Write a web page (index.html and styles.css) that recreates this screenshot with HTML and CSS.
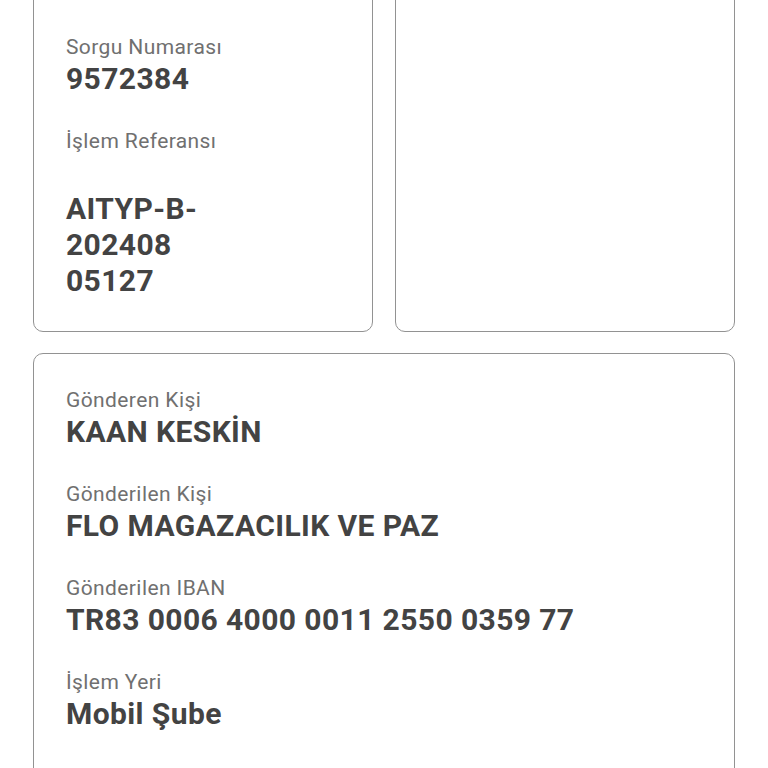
FILE: index.html
```html
<!DOCTYPE html>
<html lang="tr">
<head>
    <meta charset="UTF-8">
    <meta name="viewport" content="width=device-width, initial-scale=1.0">
    <title>İşlem Detayı</title>
    <link rel="stylesheet" href="styles.css">
</head>
<body>
    <div class="page">
        <div class="top-row">
            <div class="card card-top">
                <div class="field">
                    <div class="label">Sorgu Numarası</div>
                    <div class="value">9572384</div>
                </div>
                <div class="field">
                    <div class="label">İşlem Referansı</div>
                    <div class="value value-ref">AITYP-B-<br>202408<br>05127</div>
                </div>
            </div>
            <div class="card card-top"></div>
        </div>

        <div class="card card-bottom">
            <div class="field">
                <div class="label">Gönderen Kişi</div>
                <div class="value">KAAN KESKİN</div>
            </div>
            <div class="field">
                <div class="label">Gönderilen Kişi</div>
                <div class="value">FLO MAGAZACILIK VE PAZ</div>
            </div>
            <div class="field">
                <div class="label">Gönderilen IBAN</div>
                <div class="value">TR83 0006 4000 0011 2550 0359 77</div>
            </div>
            <div class="field">
                <div class="label">İşlem Yeri</div>
                <div class="value">Mobil Şube</div>
            </div>
        </div>
    </div>
</body>
</html>
```

FILE: styles.css
```css
body, html {
    margin: 0;
    padding: 0;
    background-color: #fff;
    font-family: Roboto, "Liberation Sans", sans-serif;
}
.page {
    display: flex;
    flex-direction: column;
    gap: 21px;
    padding: 0 33px 40px;
    margin-top: -24px;
}
.top-row {
    display: grid;
    grid-template-columns: 1fr 1fr;
    gap: 22px;
}
.card {
    border: 1px solid #929292;
    border-radius: 10px;
    padding: 32px 32px 30px;
    display: flex;
    flex-direction: column;
    gap: 30px;
}
.card-top {
    padding-top: 56px;
    padding-bottom: 32px;
}
.card-bottom {
    padding-bottom: 60px;
}
.label {
    font-size: 21px;
    line-height: 28px;
    letter-spacing: 0.4px;
    color: #707070;
}
.value {
    font-size: 30px;
    line-height: 36px;
    font-weight: 700;
    letter-spacing: 0.4px;
    color: #434343;
}
.value-ref {
    margin-top: 36px;
}
```
